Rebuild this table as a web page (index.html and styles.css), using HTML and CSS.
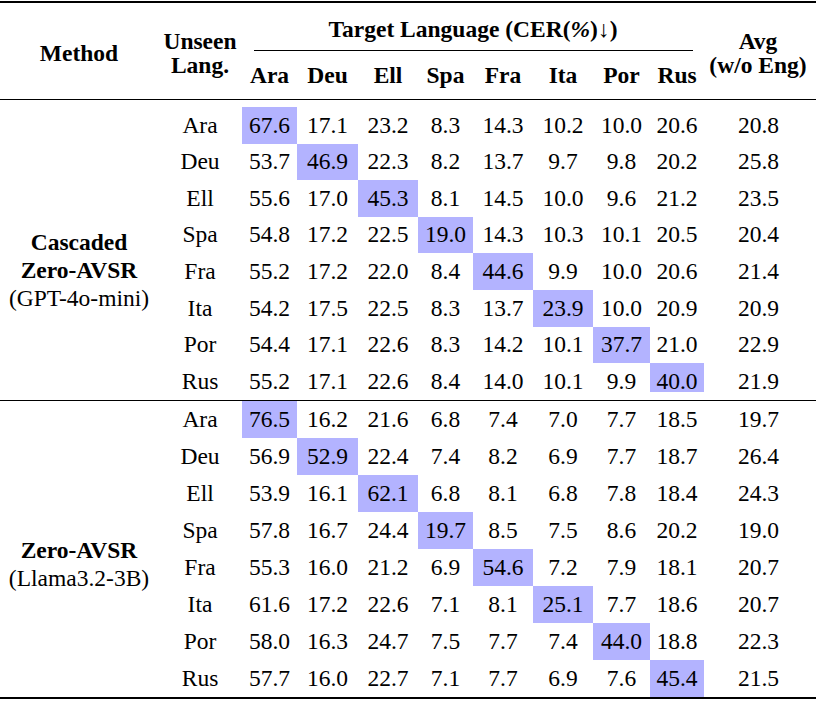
FILE: index.html
```html
<!DOCTYPE html>
<html lang="en">
<head>
<meta charset="utf-8">
<title>Zero-AVSR CER table</title>
<link rel="stylesheet" href="styles.css">
</head>
<body>
<div class="tbl">
  <div class="rule heavy top"></div>

  <div class="hcell h-method">Method</div>
  <div class="hcell h-unseen">Unseen<br>Lang.</div>
  <div class="h-target"><span class="target-text">Target Language (CER(<i>%</i>)↓)</span><div class="cmid"></div></div>
  <div class="hcell h-avg">Avg<br>(w/o Eng)</div>
  <div class="hcell h-lang">Ara</div>
  <div class="hcell h-lang">Deu</div>
  <div class="hcell h-lang">Ell</div>
  <div class="hcell h-lang">Spa</div>
  <div class="hcell h-lang">Fra</div>
  <div class="hcell h-lang">Ita</div>
  <div class="hcell h-lang">Por</div>
  <div class="hcell h-lang">Rus</div>

  <div class="rule light"></div>
  <div class="gap"></div>

  <!-- Group 1 -->
  <div class="group g1"><b>Cascaded</b><b>Zero-AVSR</b><span>(GPT-4o-mini)</span></div>
  <div class="c r1 lang">Ara</div><div class="c r1 hl">67.6</div><div class="c r1">17.1</div><div class="c r1">23.2</div><div class="c r1">8.3</div><div class="c r1">14.3</div><div class="c r1">10.2</div><div class="c r1">10.0</div><div class="c r1">20.6</div><div class="c r1 avg">20.8</div>
  <div class="c r1 lang">Deu</div><div class="c r1">53.7</div><div class="c r1 hl">46.9</div><div class="c r1">22.3</div><div class="c r1">8.2</div><div class="c r1">13.7</div><div class="c r1">9.7</div><div class="c r1">9.8</div><div class="c r1">20.2</div><div class="c r1 avg">25.8</div>
  <div class="c r1 lang">Ell</div><div class="c r1">55.6</div><div class="c r1">17.0</div><div class="c r1 hl">45.3</div><div class="c r1">8.1</div><div class="c r1">14.5</div><div class="c r1">10.0</div><div class="c r1">9.6</div><div class="c r1">21.2</div><div class="c r1 avg">23.5</div>
  <div class="c r1 lang">Spa</div><div class="c r1">54.8</div><div class="c r1">17.2</div><div class="c r1">22.5</div><div class="c r1 hl">19.0</div><div class="c r1">14.3</div><div class="c r1">10.3</div><div class="c r1">10.1</div><div class="c r1">20.5</div><div class="c r1 avg">20.4</div>
  <div class="c r1 lang">Fra</div><div class="c r1">55.2</div><div class="c r1">17.2</div><div class="c r1">22.0</div><div class="c r1">8.4</div><div class="c r1 hl">44.6</div><div class="c r1">9.9</div><div class="c r1">10.0</div><div class="c r1">20.6</div><div class="c r1 avg">21.4</div>
  <div class="c r1 lang">Ita</div><div class="c r1">54.2</div><div class="c r1">17.5</div><div class="c r1">22.5</div><div class="c r1">8.3</div><div class="c r1">13.7</div><div class="c r1 hl">23.9</div><div class="c r1">10.0</div><div class="c r1">20.9</div><div class="c r1 avg">20.9</div>
  <div class="c r1 lang">Por</div><div class="c r1">54.4</div><div class="c r1">17.1</div><div class="c r1">22.6</div><div class="c r1">8.3</div><div class="c r1">14.2</div><div class="c r1">10.1</div><div class="c r1 hl">37.7</div><div class="c r1">21.0</div><div class="c r1 avg">22.9</div>
  <div class="c r1 lang">Rus</div><div class="c r1">55.2</div><div class="c r1">17.1</div><div class="c r1">22.6</div><div class="c r1">8.4</div><div class="c r1">14.0</div><div class="c r1">10.1</div><div class="c r1">9.9</div><div class="c r1 hl-short">40.0</div><div class="c r1 avg">21.9</div>

  <div class="rule light"></div>

  <!-- Group 2 -->
  <div class="group g2"><b>Zero-AVSR</b><span>(Llama3.2-3B)</span></div>
  <div class="c r2 lang">Ara</div><div class="c r2 hl">76.5</div><div class="c r2">16.2</div><div class="c r2">21.6</div><div class="c r2">6.8</div><div class="c r2">7.4</div><div class="c r2">7.0</div><div class="c r2">7.7</div><div class="c r2">18.5</div><div class="c r2 avg">19.7</div>
  <div class="c r2 lang">Deu</div><div class="c r2">56.9</div><div class="c r2 hl">52.9</div><div class="c r2">22.4</div><div class="c r2">7.4</div><div class="c r2">8.2</div><div class="c r2">6.9</div><div class="c r2">7.7</div><div class="c r2">18.7</div><div class="c r2 avg">26.4</div>
  <div class="c r2 lang">Ell</div><div class="c r2">53.9</div><div class="c r2">16.1</div><div class="c r2 hl">62.1</div><div class="c r2">6.8</div><div class="c r2">8.1</div><div class="c r2">6.8</div><div class="c r2">7.8</div><div class="c r2">18.4</div><div class="c r2 avg">24.3</div>
  <div class="c r2 lang">Spa</div><div class="c r2">57.8</div><div class="c r2">16.7</div><div class="c r2">24.4</div><div class="c r2 hl">19.7</div><div class="c r2">8.5</div><div class="c r2">7.5</div><div class="c r2">8.6</div><div class="c r2">20.2</div><div class="c r2 avg">19.0</div>
  <div class="c r2 lang">Fra</div><div class="c r2">55.3</div><div class="c r2">16.0</div><div class="c r2">21.2</div><div class="c r2">6.9</div><div class="c r2 hl">54.6</div><div class="c r2">7.2</div><div class="c r2">7.9</div><div class="c r2">18.1</div><div class="c r2 avg">20.7</div>
  <div class="c r2 lang">Ita</div><div class="c r2">61.6</div><div class="c r2">17.2</div><div class="c r2">22.6</div><div class="c r2">7.1</div><div class="c r2">8.1</div><div class="c r2 hl">25.1</div><div class="c r2">7.7</div><div class="c r2">18.6</div><div class="c r2 avg">20.7</div>
  <div class="c r2 lang">Por</div><div class="c r2">58.0</div><div class="c r2">16.3</div><div class="c r2">24.7</div><div class="c r2">7.5</div><div class="c r2">7.7</div><div class="c r2">7.4</div><div class="c r2 hl">44.0</div><div class="c r2">18.8</div><div class="c r2 avg">22.3</div>
  <div class="c r2 lang">Rus</div><div class="c r2">57.7</div><div class="c r2">16.0</div><div class="c r2">22.7</div><div class="c r2">7.1</div><div class="c r2">7.7</div><div class="c r2">6.9</div><div class="c r2">7.6</div><div class="c r2 hl">45.4</div><div class="c r2 avg">21.5</div>

  <div class="rule heavy"></div>
</div>
</body>
</html>
```

FILE: styles.css
```css
html,
body {
  margin: 0;
  padding: 0;
  background: #ffffff;
}

body,
.tbl {
  font-family: "Liberation Serif", serif;
  font-size: 23.5px;
  color: #000000;
}

.tbl {
  display: grid;
  grid-template-columns: 158px 84px 55px 61px 60px 55px 60px 60px 57px 54px 112px;
  width: 816px;
  padding-top: 1px;
}

.rule {
  grid-column: 1 / -1;
  background: #000000;
}

.rule.heavy {
  height: 2px;
}

.rule.light {
  height: 1px;
}

.gap {
  grid-column: 1 / -1;
  height: 7px;
}

/* header */
.hcell {
  display: flex;
  align-items: center;
  justify-content: center;
  text-align: center;
  font-weight: bold;
  line-height: 24px;
}

.h-method,
.h-unseen,
.h-avg {
  grid-row: span 2;
  padding-top: 4px;
}

.h-avg {
  padding-right: 4px;
}

.h-target {
  grid-column: 3 / span 8;
  height: 48px;
  display: flex;
  flex-direction: column;
  align-items: center;
  justify-content: flex-end;
  font-weight: bold;
  line-height: 24px;
}

.target-text {
  padding-bottom: 9px;
}

.target-text i {
  font-style: italic;
}

.cmid {
  align-self: stretch;
  height: 1px;
  margin: 0 11px 0 12px;
  background: #000000;
}

.h-lang {
  height: 48px;
}

/* body */
.c {
  display: flex;
  align-items: center;
  justify-content: center;
  line-height: 1;
}

.r1 {
  height: 36.6px;
}

.r2 {
  height: 37px;
}

.avg {
  padding-right: 3px;
}

.hl {
  background: #b3b3ff;
}

.hl-short {
  background: linear-gradient(#b3b3ff 0, #b3b3ff 29px, transparent 29px);
}

.group {
  grid-column: 1;
  grid-row: span 8;
  display: flex;
  flex-direction: column;
  align-items: center;
  justify-content: center;
  line-height: 28px;
}

.g1 {
  padding-top: 33px;
}

.g2 {
  padding-top: 30px;
}
```
